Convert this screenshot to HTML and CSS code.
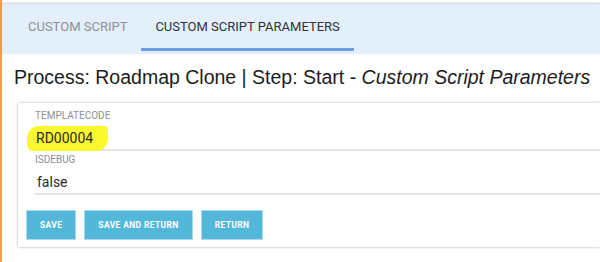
FILE: index.html
```html
<!DOCTYPE html>
<html>
  <head>
    <title>Custom Script Parameters</title>
    <link rel="stylesheet" href="styles.css">
  </head>
  <body>
    <div class="page">
      <div class="tabs">
        <div class="tab">Custom Script</div>
        <div class="tab active">Custom Script Parameters</div>
      </div>

      <h1 class="title">Process: Roadmap Clone | Step: Start - <em>Custom Script Parameters</em></h1>

      <div class="card">
        <div class="field">
          <div class="label">TEMPLATECODE</div>
          <div class="value"><span class="marker">RD00004</span></div>
        </div>
        <div class="field">
          <div class="label">ISDEBUG</div>
          <div class="value">false</div>
        </div>

        <div class="buttons">
          <button class="btn">Save</button>
          <button class="btn">Save and Return</button>
          <button class="btn">Return</button>
        </div>
      </div>
    </div>
  </body>
</html>
```

FILE: styles.css
```css
body {
  margin: 0;
  background-color: white;
  font-family: "Open Sans", sans-serif;
  overflow: hidden;
}

.page {
  height: 262px;
  border-left: 2px solid #f3a04e;
  padding-top: 4px;
  box-sizing: border-box;
}

.tabs {
  display: flex;
  height: 50px;
  padding-left: 12px;
  background-color: #e3effb;
  box-shadow: 0 -1px 2px rgba(0, 0, 0, 0.2);
}

.tab {
  padding: 2px 14px 0 14px;
  line-height: 42px;
  font-family: Roboto, sans-serif;
  font-size: 13px;
  text-transform: uppercase;
  color: #8d9195;
  border-bottom: 3px solid transparent;
  margin-bottom: 3px;
}

.tab.active {
  color: #2f3236;
  border-bottom-color: #6a9fe8;
}

.title {
  margin: 12px 0 0 12px;
  line-height: 22px;
  font-family: "Liberation Sans", Arial, sans-serif;
  font-weight: normal;
  font-size: 19.5px;
  color: #1c1c1c;
  white-space: nowrap;
}

.title em {
  font-style: italic;
}

.card {
  margin: 15px 0 0 16px;
  padding: 4px 0 7px 8px;
  background: white;
  box-shadow: 0 0 3px rgba(0, 0, 0, 0.3);
}

.field {
  margin-left: 9px;
  border-bottom: 2px solid #e4e4e4;
}

.label {
  padding-top: 3px;
  line-height: 12px;
  font-family: Roboto, sans-serif;
  font-size: 10px;
  color: #8a8f93;
}

.value {
  padding: 6px 0 1px 2px;
  line-height: 20px;
  font-family: Roboto, sans-serif;
  font-size: 14px;
  color: #2a2a2a;
}

.marker {
  background-color: #fbf830;
  padding: 4px 15px 5px 9px;
  margin-left: -10px;
  border-radius: 12px 4px 12px 6px;
}

.buttons {
  display: flex;
  gap: 8px;
  margin-top: 15px;
}

.btn {
  height: 30px;
  padding: 0 13px;
  border: 1px solid #a9dbee;
  background-color: #53b7d9;
  color: white;
  font-family: Roboto, sans-serif;
  font-weight: bold;
  font-size: 8.5px;
  letter-spacing: 0.35px;
  text-transform: uppercase;
  cursor: pointer;
}
```
